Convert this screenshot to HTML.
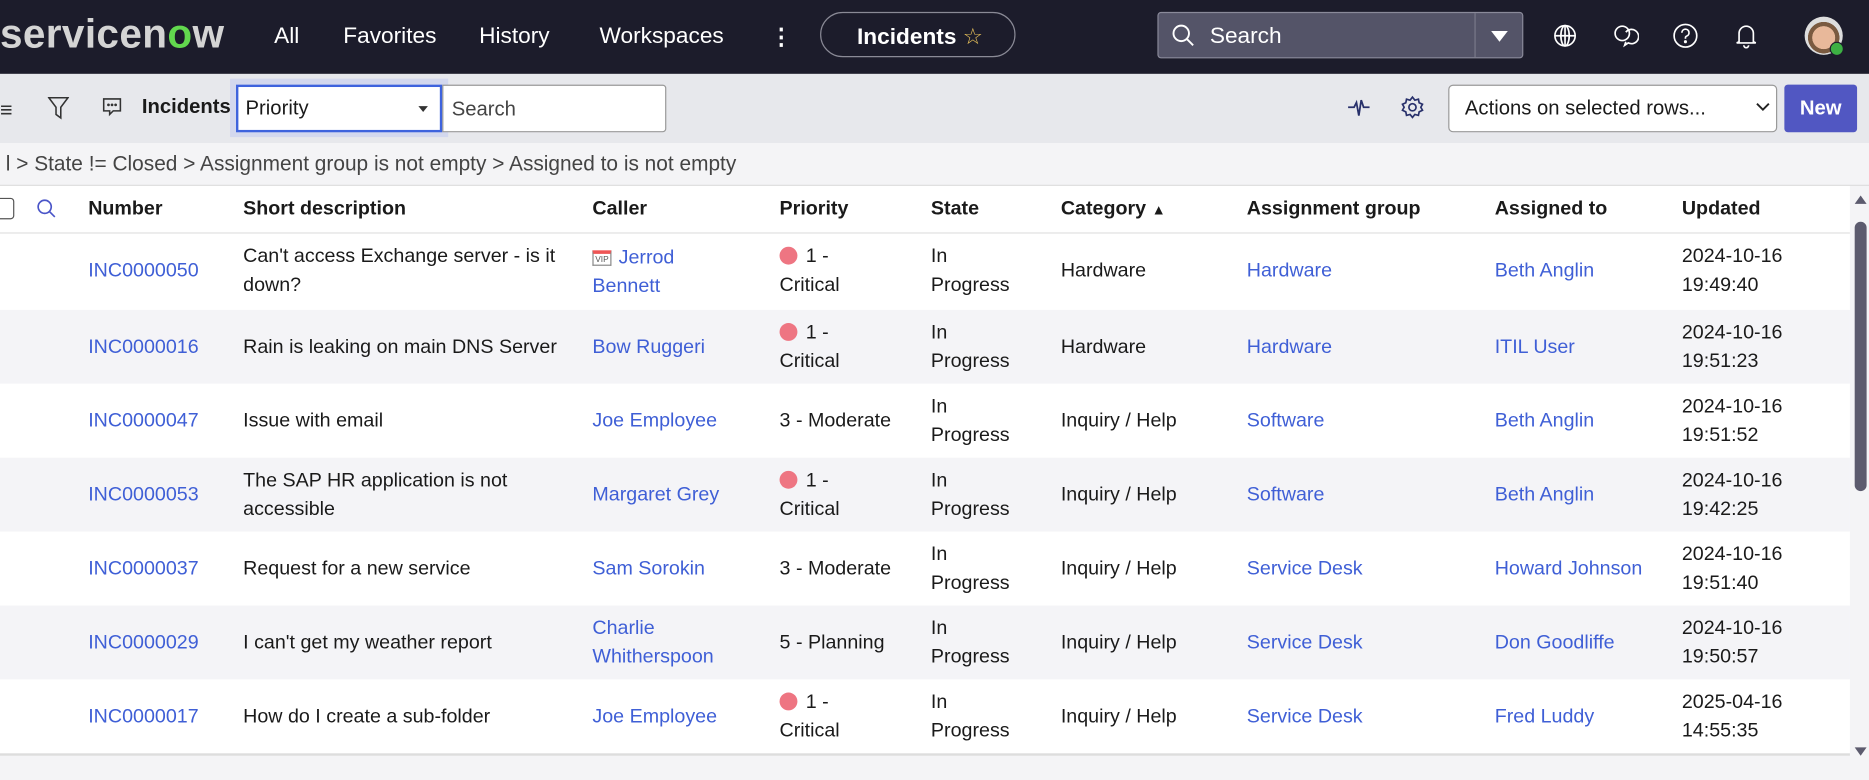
<!DOCTYPE html>
<html><head><meta charset="utf-8"><style>
html,body{margin:0;padding:0;width:1869px;height:780px;overflow:hidden;background:#fff}
#w{width:1568px;height:655px;transform:scale(1.19196);transform-origin:0 0;position:relative;font-family:"Liberation Sans",sans-serif;color:#1a1a1a}
.a{position:absolute}
.nav{left:0;top:0;width:1568px;height:62px;background:#1c1c2b}
.nt{color:#fff;font-size:19px;top:20px}
.tb{left:0;top:62px;width:1568px;height:58px;background:#e7e8ec}
.bc{left:0;top:120px;width:1568px;height:35px;background:#f4f4f6;border-bottom:1px solid #ddd;font-size:17.5px;color:#444;line-height:35px}
.hd{left:0;top:156px;width:1552px;height:39px;background:#fff;border-bottom:1px solid #ddd;font-size:16.5px;font-weight:bold}
.hd span{position:absolute;top:10px}
.row{position:absolute;left:0;width:1552px;height:62px;font-size:16.5px;line-height:24px}
.row div{position:absolute;top:0;height:62px;display:flex;align-items:center}
.l{color:#3f5fd6}
.dot{display:inline-block;width:15px;height:15px;border-radius:50%;background:#ee7582;margin-right:7px;vertical-align:-2px}
</style></head><body><div id="w">
<div class="a nav"></div>
<div class="a" style="left:0;top:10px;font-size:34px;font-weight:bold;color:#d4d4d4;letter-spacing:0.3px">servicen<span style="color:#62d84e">o</span>w</div>
<div class="a nt" style="left:230px">All</div>
<div class="a nt" style="left:288px">Favorites</div>
<div class="a nt" style="left:402px">History</div>
<div class="a nt" style="left:503px">Workspaces</div>
<div class="a nt" style="left:646px;font-weight:bold">⋮</div>
<div class="a" style="left:688px;top:10px;width:164px;height:38px;border:1px solid #8a8a96;border-radius:20px;box-sizing:border-box"></div>
<div class="a nt" style="left:719px;font-weight:bold">Incidents <span style="color:#e8c15a;font-weight:normal">☆</span></div>
<div class="a" style="left:971px;top:10px;width:307px;height:39px;background:#545468;border:1px solid #8a8a9a;border-radius:3px;box-sizing:border-box"></div>
<div class="a" style="left:1237px;top:11px;width:1px;height:37px;background:#7a7a8a"></div>
<svg class="a" style="left:982px;top:19px" width="22" height="22" viewBox="0 0 22 22"><circle cx="9" cy="9" r="6.5" fill="none" stroke="#fff" stroke-width="1.6"/><line x1="14" y1="14" x2="19" y2="19" stroke="#fff" stroke-width="1.6"/></svg>
<div class="a nt" style="left:1015px">Search</div>
<div class="a" style="left:1251px;top:26px;border-left:7px solid transparent;border-right:7px solid transparent;border-top:9px solid #fff"></div>
<svg class="a" style="left:1303px;top:20px" width="20" height="20" viewBox="0 0 20 20" fill="none" stroke="#fff" stroke-width="1.4"><circle cx="10" cy="10" r="8.5"/><ellipse cx="10" cy="10" rx="3.5" ry="8.5"/><line x1="1.5" y1="10" x2="18.5" y2="10"/><line x1="10" y1="1.5" x2="10" y2="18.5"/></svg>
<svg class="a" style="left:1353px;top:20px" width="22" height="20" viewBox="0 0 22 20" fill="none" stroke="#fff" stroke-width="1.4"><circle cx="8" cy="8" r="6"/><path d="M11 7a6 6 0 1 1 2 9l-3 2 1-3"/></svg>
<svg class="a" style="left:1403px;top:19px" width="22" height="22" viewBox="0 0 22 22" fill="none" stroke="#fff" stroke-width="1.4"><circle cx="11" cy="11" r="9.5"/><path d="M8 8.5a3 3 0 1 1 4 2.8c-1 .4-1 1-1 2.2"/><circle cx="11" cy="16" r=".6" fill="#fff"/></svg>
<svg class="a" style="left:1455px;top:19px" width="20" height="22" viewBox="0 0 20 22" fill="none" stroke="#fff" stroke-width="1.4"><path d="M4 16V9a6 6 0 0 1 12 0v7l2 1H2z"/><path d="M8 19a2 2 0 0 0 4 0"/></svg>
<div class="a" style="left:1514px;top:14px;width:32px;height:32px;border-radius:50%;background:radial-gradient(circle at 50% 55%,#e8b89a 0 40%,#7a5a40 41% 55%,#ddd 56%)"></div>
<div class="a" style="left:1535px;top:35px;width:10px;height:10px;border-radius:50%;background:#3cb043;border:1px solid #1c1c2b"></div>

<div class="a tb"></div>
<div class="a" style="left:0;top:82px;font-size:18px;color:#333">≡</div>
<svg class="a" style="left:40px;top:81px" width="18" height="20" viewBox="0 0 18 20" fill="none" stroke="#333" stroke-width="1.3"><path d="M1 1h16l-6 8v9l-4-3V9z"/></svg>
<svg class="a" style="left:85px;top:81px" width="18" height="18" viewBox="0 0 18 18" fill="none" stroke="#333" stroke-width="1.3"><path d="M2 2h14v10H10l-3 3v-3H2z"/><circle cx="6" cy="7" r=".5" fill="#333"/><circle cx="9" cy="7" r=".5" fill="#333"/><circle cx="12" cy="7" r=".5" fill="#333"/></svg>
<div class="a" style="left:119px;top:80px;font-size:17px;font-weight:bold">Incidents</div>
<div class="a" style="left:193px;top:66px;width:183px;height:49px;background:#d3d8ee"></div>
<div class="a" style="left:198px;top:71px;width:173px;height:40px;background:#fff;border:2px solid #3e63dd;box-sizing:border-box"></div>
<div class="a" style="left:206px;top:81px;font-size:17px">Priority</div>
<div class="a" style="left:351px;top:89px;border-left:4px solid transparent;border-right:4px solid transparent;border-top:5px solid #333"></div>
<div class="a" style="left:371px;top:71px;width:188px;height:40px;background:#fff;border:1px solid #999;border-radius:0 3px 3px 0;box-sizing:border-box"></div>
<div class="a" style="left:379px;top:82px;font-size:17px;color:#444">Search</div>
<svg class="a" style="left:1130px;top:80px" width="20" height="20" viewBox="0 0 20 20" fill="none" stroke="#28306b" stroke-width="1.5"><path d="M1 10h5l2-4 2 11 2-13 2 6h5"/></svg>
<svg class="a" style="left:1175px;top:80px" width="20" height="20" viewBox="0 0 20 20" fill="none" stroke="#28306b" stroke-width="1.4"><circle cx="10" cy="10" r="3"/><path d="M10 1.5l2 2.5 3-.8.6 3 2.8 1.3-1.4 2.5 1.4 2.5-2.8 1.3-.6 3-3-.8-2 2.5-2-2.5-3 .8-.6-3L1.6 12.5 3 10 1.6 7.5 4.4 6.2 5 3.2l3 .8z"/></svg>
<div class="a" style="left:1215px;top:71px;width:276px;height:40px;background:#fff;border:1px solid #999;border-radius:4px;box-sizing:border-box"></div>
<div class="a" style="left:1229px;top:81px;font-size:17px">Actions on selected rows...</div>
<svg class="a" style="left:1473px;top:86px" width="12" height="8" viewBox="0 0 12 8"><path d="M1 1l5 5 5-5" fill="none" stroke="#222" stroke-width="1.6"/></svg>
<div class="a" style="left:1497px;top:71px;width:61px;height:40px;background:#5157c2;border-radius:3px;color:#fff;font-weight:bold;font-size:17px;line-height:40px;text-align:center">New</div>

<div class="a bc">&nbsp;l &gt; State != Closed &gt; Assignment group is not empty &gt; Assigned to is not empty</div>

<div class="a hd">
<div class="a" style="left:-6px;top:10px;width:16px;height:16px;border:1.5px solid #555;border-radius:3px"></div>
<svg class="a" style="left:30px;top:10px" width="18" height="18" viewBox="0 0 18 18" fill="none" stroke="#4a55c8" stroke-width="1.4"><circle cx="7.5" cy="7.5" r="5.5"/><line x1="11.5" y1="11.5" x2="16" y2="16"/></svg>
<span style="left:74px">Number</span><span style="left:204px">Short description</span><span style="left:497px">Caller</span><span style="left:654px">Priority</span><span style="left:781px">State</span><span style="left:890px">Category <span style="position:static;font-size:12px">▲</span></span><span style="left:1046px">Assignment group</span><span style="left:1254px">Assigned to</span><span style="left:1411px">Updated</span>
</div>

<div class="row" style="top:196px;background:#fff"><div class="l" style="left:74px">INC0000050</div><div style="left:204px;width:285px">Can't access Exchange server - is it down?</div><div class="l" style="left:497px;width:130px;display:block;padding-top:8px;box-sizing:border-box"><span style="display:inline-block;width:16px;height:13px;border:1px solid #888;border-top:3px solid #e55;font-size:7px;line-height:11px;color:#555;text-align:center;vertical-align:1px;margin-right:6px;box-sizing:border-box">VIP</span>Jerrod<br>Bennett</div><div style="left:654px;width:110px"><span><span class="dot"></span>1 -<br>Critical</span></div><div style="left:781px">In<br>Progress</div><div style="left:890px">Hardware</div><div class="l" style="left:1046px">Hardware</div><div class="l" style="left:1254px">Beth Anglin</div><div style="left:1411px">2024-10-16<br>19:49:40</div></div>
<div class="row" style="top:260px;background:#f4f4f7"><div class="l" style="left:74px">INC0000016</div><div style="left:204px">Rain is leaking on main DNS Server</div><div class="l" style="left:497px">Bow Ruggeri</div><div style="left:654px"><span><span class="dot"></span>1 -<br>Critical</span></div><div style="left:781px">In<br>Progress</div><div style="left:890px">Hardware</div><div class="l" style="left:1046px">Hardware</div><div class="l" style="left:1254px">ITIL User</div><div style="left:1411px">2024-10-16<br>19:51:23</div></div>
<div class="row" style="top:322px;background:#fff"><div class="l" style="left:74px">INC0000047</div><div style="left:204px">Issue with email</div><div class="l" style="left:497px">Joe Employee</div><div style="left:654px">3 - Moderate</div><div style="left:781px">In<br>Progress</div><div style="left:890px">Inquiry / Help</div><div class="l" style="left:1046px">Software</div><div class="l" style="left:1254px">Beth Anglin</div><div style="left:1411px">2024-10-16<br>19:51:52</div></div>
<div class="row" style="top:384px;background:#f4f4f7"><div class="l" style="left:74px">INC0000053</div><div style="left:204px;width:270px">The SAP HR application is not accessible</div><div class="l" style="left:497px">Margaret Grey</div><div style="left:654px"><span><span class="dot"></span>1 -<br>Critical</span></div><div style="left:781px">In<br>Progress</div><div style="left:890px">Inquiry / Help</div><div class="l" style="left:1046px">Software</div><div class="l" style="left:1254px">Beth Anglin</div><div style="left:1411px">2024-10-16<br>19:42:25</div></div>
<div class="row" style="top:446px;background:#fff"><div class="l" style="left:74px">INC0000037</div><div style="left:204px">Request for a new service</div><div class="l" style="left:497px">Sam Sorokin</div><div style="left:654px">3 - Moderate</div><div style="left:781px">In<br>Progress</div><div style="left:890px">Inquiry / Help</div><div class="l" style="left:1046px">Service Desk</div><div class="l" style="left:1254px">Howard Johnson</div><div style="left:1411px">2024-10-16<br>19:51:40</div></div>
<div class="row" style="top:508px;background:#f4f4f7"><div class="l" style="left:74px">INC0000029</div><div style="left:204px">I can't get my weather report</div><div class="l" style="left:497px">Charlie<br>Whitherspoon</div><div style="left:654px">5 - Planning</div><div style="left:781px">In<br>Progress</div><div style="left:890px">Inquiry / Help</div><div class="l" style="left:1046px">Service Desk</div><div class="l" style="left:1254px">Don Goodliffe</div><div style="left:1411px">2024-10-16<br>19:50:57</div></div>
<div class="row" style="top:570px;background:#fff"><div class="l" style="left:74px">INC0000017</div><div style="left:204px">How do I create a sub-folder</div><div class="l" style="left:497px">Joe Employee</div><div style="left:654px"><span><span class="dot"></span>1 -<br>Critical</span></div><div style="left:781px">In<br>Progress</div><div style="left:890px">Inquiry / Help</div><div class="l" style="left:1046px">Service Desk</div><div class="l" style="left:1254px">Fred Luddy</div><div style="left:1411px">2025-04-16<br>14:55:35</div></div>
<div class="a" style="left:0;top:632px;width:1568px;height:23px;background:#f4f4f6;border-top:2px solid #ddd"></div>
<div class="a" style="left:1552px;top:156px;width:16px;height:480px;background:#f4f4f6"></div>
<div class="a" style="left:1556px;top:164px;border-left:5px solid transparent;border-right:5px solid transparent;border-bottom:7px solid #5c5b6e"></div>
<div class="a" style="left:1556px;top:186px;width:10px;height:226px;background:#5c5b6e;border-radius:5px"></div>
<div class="a" style="left:1556px;top:627px;border-left:5px solid transparent;border-right:5px solid transparent;border-top:7px solid #5c5b6e"></div>
</div></body></html>
